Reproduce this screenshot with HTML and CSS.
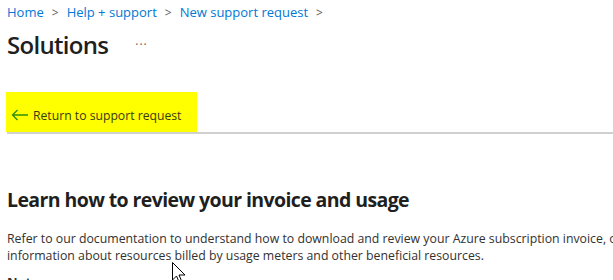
FILE: index.html
```html
<!DOCTYPE html>
<html lang="en">
	<head>
		<meta charset="UTF-8" />
		<meta name="viewport" content="width=device-width, initial-scale=1.0" />
		<title>Solutions</title>
		<link rel="stylesheet" href="styles.css">
	</head>
	<body>
		<div id="page">
			<nav class="crumbs">
				<a href="#">Home</a>
				<span class="chev">&gt;</span>
				<a href="#">Help + support</a>
				<span class="chev">&gt;</span>
				<a href="#">New support request</a>
				<span class="chev">&gt;</span>
			</nav>
			<header class="title">
				<h1>Solutions</h1>
				<span class="more">&middot;&middot;&middot;</span>
			</header>
			<div class="toolbar">
				<a class="back" href="#">
					<svg width="18" height="12" viewBox="0 0 18 12">
						<path d="M17 6H1.5M6.5 1L1.5 6l5 5" fill="none" stroke="#2f8f0a" stroke-width="1.3"/>
					</svg>
					<span>Return to support request</span>
				</a>
			</div>
			<section class="content">
				<h2>Learn how to review your invoice and usage</h2>
				<p>Refer to our documentation to understand how to download and review your Azure subscription invoice, or find information about resources billed by usage meters and other beneficial resources.</p>
				<h3>Note</h3>
			</section>
			<svg class="cursor" width="14" height="22" viewBox="0 0 14 22">
				<path d="M0.5 0.5V18l4-4 3 7 2.5-1-3-7h6z" fill="#fff" stroke="#000" stroke-width="1"/>
			</svg>
		</div>
	</body>
</html>
```

FILE: styles.css
```css
body {
	margin: 0;
	font-family: "Open Sans", sans-serif;
	color: #323130;
	background: #fff;
	overflow: hidden;
}
#page {
	position: relative;
	width: 613px;
	height: 280px;
	overflow: hidden;
}

.crumbs {
	display: flex;
	align-items: center;
	gap: 8px;
	padding: 2px 7px 0;
	height: 20px;
	font-size: 13px;
}
.crumbs a {
	color: #0078d4;
	text-decoration: none;
}
.crumbs .chev {
	color: #605e5c;
	font-size: 12px;
	transform: scaleY(1.1);
}

.title {
	display: flex;
	align-items: center;
	gap: 27px;
	padding: 5px 7px 0;
	height: 34px;
}
.title h1 {
	margin: 0;
	font-size: 24px;
	font-weight: 600;
	letter-spacing: -0.7px;
	color: #201f1e;
}
.title .more {
	font-size: 12px;
	color: #605e5c;
	letter-spacing: 1px;
	margin-top: 1px;
}

.toolbar {
	margin: 31px 0 0 7px;
	border-bottom: 2px solid #d2d0ce;
}
.back {
	display: inline-flex;
	align-items: center;
	gap: 4px;
	height: 34px;
	margin-left: -1px;
	padding: 6px 16px 0 5px;
	background: #ffff00;
	color: #3a3a10;
	text-decoration: none;
	font-size: 12.2px;
}
.back svg {
	margin-top: -1px;
}

.content {
	padding: 54px 7px 0;
}
.content h2 {
	margin: 0;
	font-size: 19.5px;
	font-weight: 700;
	color: #201f1e;
	line-height: 24px;
	letter-spacing: -0.6px;
}
.content p {
	margin: 18px 0 0;
	width: 690px;
	font-size: 12.3px;
	line-height: 17px;
}
.content h3 {
	margin: 9px 0 0;
	font-size: 13px;
	font-weight: 700;
}

.cursor {
	position: absolute;
	left: 172px;
	top: 262px;
}
```
